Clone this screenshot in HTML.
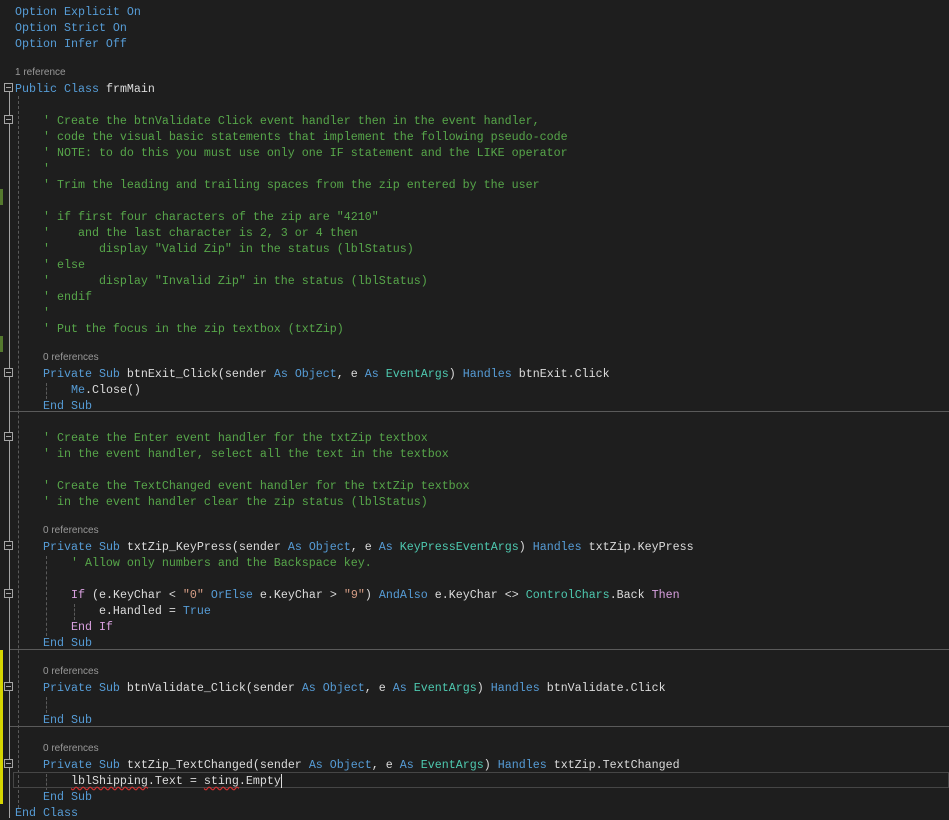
<!DOCTYPE html>
<html><head><meta charset="utf-8"><style>
html,body{margin:0;padding:0;background:#1e1e1e;width:949px;height:820px;overflow:hidden;position:relative}
.l{position:absolute;left:15px;height:16px;line-height:16px;font-family:"Liberation Mono",monospace;font-size:11.67px;color:#dcdcdc;white-space:pre;margin-top:1px}
.cl{position:absolute;font-family:"Liberation Sans",sans-serif;font-size:10px;color:#999;height:12px;line-height:12px}
.k{color:#569cd6}.c{color:#57a64a}.t{color:#4ec9b0}.s{color:#d69d85}.p{color:#d8a0df}
.sep{position:absolute;left:10px;right:0;height:1px;background:#5a5a5a}
.fb{position:absolute;left:4px;width:9px;height:9px;border:1px solid #a5a5a5;box-sizing:border-box;background:#1e1e1e}
.fb:after{content:"";position:absolute;left:1px;right:1px;top:3px;height:1px;background:#a5a5a5}
.fl{position:absolute;left:9px;width:1px;background:#a5a5a5}
.dg{position:absolute;width:0;border-left:1px dashed #5a5a5a}
.bar{position:absolute;left:0;width:3px}
.sq{text-decoration:underline wavy #d03030;text-underline-offset:2px}
</style></head><body>
<div class="bar" style="top:189px;height:16px;background:#557a2e"></div>
<div class="bar" style="top:336px;height:16px;background:#557a2e"></div>
<div class="bar" style="top:650px;height:154px;background:#d6d600"></div>
<div class="fl" style="top:92px;height:726px"></div>
<div class="dg" style="left:18px;top:96px;height:712px"></div>
<div class="dg" style="left:46px;top:383px;height:16px"></div>
<div class="dg" style="left:46px;top:556px;height:80px"></div>
<div class="dg" style="left:74px;top:604px;height:16px"></div>
<div class="dg" style="left:46px;top:697px;height:16px"></div>
<div class="dg" style="left:46px;top:774px;height:16px"></div>
<div class="fb" style="top:83px"></div>
<div class="fb" style="top:115px"></div>
<div class="fb" style="top:368px"></div>
<div class="fb" style="top:432px"></div>
<div class="fb" style="top:541px"></div>
<div class="fb" style="top:589px"></div>
<div class="fb" style="top:682px"></div>
<div class="fb" style="top:759px"></div>
<div class="sep" style="top:411px"></div>
<div class="sep" style="top:649px"></div>
<div class="sep" style="top:726px"></div>
<div style="position:absolute;left:13px;right:0;top:772px;height:16px;border:1px solid #464646;box-sizing:border-box"></div>

<div class="l k" style="top:3px">Option Explicit On</div>
<div class="l k" style="top:19px">Option Strict On</div>
<div class="l k" style="top:35px">Option Infer Off</div>
<div class="cl" style="left:15px;top:67px">1 reference</div>
<div class="l" style="top:80px"><span class="k">Public Class</span> frmMain</div>
<div class="l c" style="top:112px">    ' Create the btnValidate Click event handler then in the event handler,</div>
<div class="l c" style="top:128px">    ' code the visual basic statements that implement the following pseudo-code</div>
<div class="l c" style="top:144px">    ' NOTE: to do this you must use only one IF statement and the LIKE operator</div>
<div class="l c" style="top:160px">    '</div>
<div class="l c" style="top:176px">    ' Trim the leading and trailing spaces from the zip entered by the user</div>
<div class="l c" style="top:208px">    ' if first four characters of the zip are "4210"</div>
<div class="l c" style="top:224px">    '    and the last character is 2, 3 or 4 then</div>
<div class="l c" style="top:240px">    '       display "Valid Zip" in the status (lblStatus)</div>
<div class="l c" style="top:256px">    ' else</div>
<div class="l c" style="top:272px">    '       display "Invalid Zip" in the status (lblStatus)</div>
<div class="l c" style="top:288px">    ' endif</div>
<div class="l c" style="top:304px">    '</div>
<div class="l c" style="top:320px">    ' Put the focus in the zip textbox (txtZip)</div>
<div class="cl" style="left:43px;top:352px">0 references</div>
<div class="l" style="top:365px">    <span class="k">Private Sub</span> btnExit_Click(sender <span class="k">As Object</span>, e <span class="k">As</span> <span class="t">EventArgs</span>) <span class="k">Handles</span> btnExit.Click</div>
<div class="l" style="top:381px">        <span class="k">Me</span>.Close()</div>
<div class="l k" style="top:397px">    End Sub</div>
<div class="l c" style="top:429px">    ' Create the Enter event handler for the txtZip textbox</div>
<div class="l c" style="top:445px">    ' in the event handler, select all the text in the textbox</div>
<div class="l c" style="top:477px">    ' Create the TextChanged event handler for the txtZip textbox</div>
<div class="l c" style="top:493px">    ' in the event handler clear the zip status (lblStatus)</div>
<div class="cl" style="left:43px;top:525px">0 references</div>
<div class="l" style="top:538px">    <span class="k">Private Sub</span> txtZip_KeyPress(sender <span class="k">As Object</span>, e <span class="k">As</span> <span class="t">KeyPressEventArgs</span>) <span class="k">Handles</span> txtZip.KeyPress</div>
<div class="l c" style="top:554px">        ' Allow only numbers and the Backspace key.</div>
<div class="l" style="top:586px">        <span class="p">If</span> (e.KeyChar &lt; <span class="s">"0"</span> <span class="k">OrElse</span> e.KeyChar &gt; <span class="s">"9"</span>) <span class="k">AndAlso</span> e.KeyChar &lt;&gt; <span class="t">ControlChars</span>.Back <span class="p">Then</span></div>
<div class="l" style="top:602px">            e.Handled = <span class="k">True</span></div>
<div class="l p" style="top:618px">        End If</div>
<div class="l k" style="top:634px">    End Sub</div>
<div class="cl" style="left:43px;top:666px">0 references</div>
<div class="l" style="top:679px">    <span class="k">Private Sub</span> btnValidate_Click(sender <span class="k">As Object</span>, e <span class="k">As</span> <span class="t">EventArgs</span>) <span class="k">Handles</span> btnValidate.Click</div>
<div class="l k" style="top:711px">    End Sub</div>
<div class="cl" style="left:43px;top:743px">0 references</div>
<div class="l" style="top:756px">    <span class="k">Private Sub</span> txtZip_TextChanged(sender <span class="k">As Object</span>, e <span class="k">As</span> <span class="t">EventArgs</span>) <span class="k">Handles</span> txtZip.TextChanged</div>
<div class="l" style="top:772px">        <span class="sq">lblShipping</span>.Text = <span class="sq">sting</span>.Empty<span style="border-left:1px solid #dcdcdc"></span></div>
<div class="l k" style="top:788px">    End Sub</div>
<div class="l k" style="top:804px">End Class</div>
</body></html>
